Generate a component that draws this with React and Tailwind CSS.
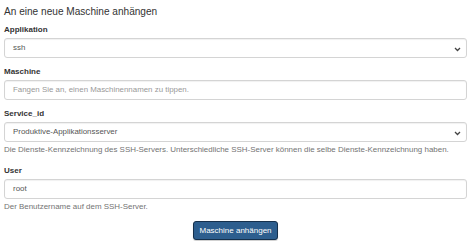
import React from "react";

const font = { fontFamily: '"Liberation Sans", Arial, sans-serif' };

function Chevron() {
  return (
    <svg width="7" height="5" viewBox="0 0 7 5" className="absolute right-[5px] top-[8px]">
      <path d="M1 1 L3.5 3.5 L6 1" fill="none" stroke="#444" strokeWidth="1.3" />
    </svg>
  );
}

function Label({ children }) {
  return (
    <div className="h-[13px] leading-[13px] text-[8px] font-bold text-[#333] mb-[2px]">{children}</div>
  );
}

function Box({ children, select, placeholder }) {
  return (
    <div className="relative h-[20px] border border-[#d4d4d4] rounded-[3px] bg-white shadow-[inset_0_1px_1px_rgba(0,0,0,0.06)] flex items-center pl-[8px] text-[7.9px]">
      <span className={placeholder ? "text-[#999]" : "text-[#555]"}>{children}</span>
      {select && <Chevron />}
    </div>
  );
}

function Help({ children }) {
  return <div className="mt-[2px] h-[12px] leading-[12px] text-[7.95px] text-[#737373]">{children}</div>;
}

export default function App() {
  return (
    <div style={font} className="w-[474px] h-[241px] bg-white pl-[4px] pr-[7px] pt-[3px] overflow-hidden">
      <div className="h-[17px] leading-[17px] text-[10.1px] text-[#333] mb-[3px]">An eine neue Maschine anhängen</div>
      <div className="mb-[7px]">
        <Label>Applikation</Label>
        <Box select>ssh</Box>
      </div>
      <div className="mb-[7px]">
        <Label>Maschine</Label>
        <Box placeholder>Fangen Sie an, einen Maschinennamen zu tippen.</Box>
      </div>
      <div className="mb-[8px]">
        <Label>Service_id</Label>
        <Box select>Produktive-Applikationsserver</Box>
        <Help>Die Dienste-Kennzeichnung des SSH-Servers. Unterschiedliche SSH-Server können die selbe Dienste-Kennzeichnung haben.</Help>
      </div>
      <div className="mb-[8px]">
        <Label>User</Label>
        <Box>root</Box>
        <Help>Der Benutzername auf dem SSH-Server.</Help>
      </div>
      <div className="flex justify-center">
        <button className="h-[19px] px-[5px] rounded-[3px] bg-[#2d5e8e] border border-[#15304c] text-white text-[8px] leading-none shadow-[0_1px_1px_rgba(0,0,0,0.2)]">
          Maschine anhängen
        </button>
      </div>
    </div>
  );
}
